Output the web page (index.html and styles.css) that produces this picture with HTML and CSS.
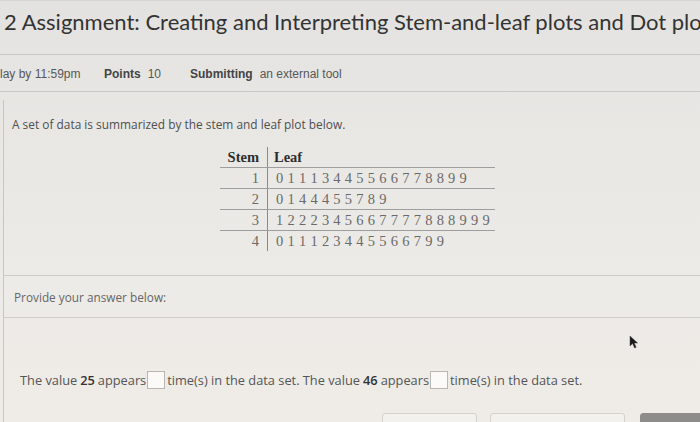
FILE: index.html
```html
<!DOCTYPE html>
<html>
<head>
<meta charset="utf-8">
<link rel="stylesheet" href="styles.css">
</head>
<body>
<div class="page">
  <header class="title-bar">
    <h1 class="title">2 Assignment: Creating and Interpreting Stem-and-leaf plots and Dot plots</h1>
  </header>
  <div class="meta">
    <span class="due">lay by 11:59pm</span>
    <span class="meta-item points"><b>Points</b><span class="val">10</span></span>
    <span class="meta-item"><b>Submitting</b><span class="val">an external tool</span></span>
  </div>
  <section class="question">
    <p class="qtext">A set of data is summarized by the stem and leaf plot below.</p>
    <table class="plot">
      <thead>
        <tr><th class="stem">Stem</th><th class="leaf">Leaf</th></tr>
      </thead>
      <tbody>
        <tr><td class="stem">1</td><td class="leaf">0 1 1 1 3 4 4 5 5 6 6 7 7 8 8 9 9</td></tr>
        <tr><td class="stem">2</td><td class="leaf">0 1 4 4 4 5 5 7 8 9</td></tr>
        <tr><td class="stem">3</td><td class="leaf">1 2 2 2 3 4 5 6 6 7 7 7 7 8 8 8 9 9 9</td></tr>
        <tr class="last"><td class="stem">4</td><td class="leaf">0 1 1 1 2 3 4 4 5 5 6 6 7 9 9</td></tr>
      </tbody>
    </table>
    <div class="provide">Provide your answer below:</div>
    <div class="answer">
      <p class="answer-text">The value <b>25</b> appears<span class="box"></span>time(s) in the data set. The value <b>46</b> appears<span class="box"></span>time(s) in the data set.</p>
    </div>
    <div class="buttons">
      <span class="btn btn-a"></span>
      <span class="btn btn-b"></span>
      <span class="btn btn-dark"></span>
    </div>
  </section>
  <svg class="cursor" width="10" height="14" viewBox="0 0 10 14"><path d="M1 1 L1 11 L3.6 8.6 L5.6 13 L7.2 12.3 L5.2 8 L8.6 8 Z" fill="#1a1a1a" stroke="#444" stroke-width="0.5"/></svg>
</div>
</body>
</html>
```
FILE: styles.css
```css
html, body {
  margin: 0;
  padding: 0;
  overflow: hidden;
}
body {
  width: 700px;
  height: 422px;
  background: linear-gradient(180deg, #e3e2e0 0%, #e8e7e4 30%, #edebe7 70%, #efece7 100%);
}
.page {
  position: relative;
  width: 700px;
  height: 422px;
  overflow: hidden;
}
.title-bar {
  height: 55px;
  border-top: 1px solid #d6d5d3;
  border-bottom: 1px solid #c9c8c5;
  box-sizing: border-box;
  padding: 6px 0 0 4px;
}
.title {
  margin: 0;
  font-family: Lato, "Open Sans", sans-serif;
  font-weight: 400;
  font-size: 22px;
  line-height: 30px;
  color: #333;
  white-space: nowrap;
}
.meta {
  height: 37px;
  box-sizing: border-box;
  border-bottom: 1px solid #c9c8c5;
  display: flex;
  align-items: center;
  font-family: "Liberation Sans", Arial, sans-serif;
  font-size: 12px;
  color: #575757;
  padding-top: 2px;
}
.due {
  width: 104px;
}
.meta-item b {
  color: #444;
  margin-right: 7px;
}
.meta-item.points {
  width: 86px;
}
.question {
  margin-top: 8px;
  border-left: 1px solid #c8c6c2;
  margin-left: 3px;
  height: 330px;
  box-sizing: border-box;
}
.qtext {
  margin: 0;
  padding: 16px 0 0 8px;
  font-family: "Open Sans", sans-serif;
  font-size: 11.9px;
  line-height: 16px;
  color: #505050;
}
.plot {
  margin: 15px 0 0 216px;
  border-collapse: collapse;
  font-family: "Liberation Serif", "Times New Roman", serif;
  font-size: 14.5px;
  color: #6a6a6a;
}
.plot th, .plot td {
  height: 20px;
  padding: 0;
  line-height: 20px;
  border-bottom: 1px solid #9e9e9e;
}
.plot tr.last td {
  border-bottom: none;
}
.plot th {
  color: #2e2e2e;
  font-weight: bold;
  text-align: left;
}
.plot .stem {
  width: 39px;
  padding-right: 8px;
  text-align: right;
  border-right: 1px solid #8a8a8a;
}
.plot .leaf {
  width: 219px;
  padding-left: 8px;
  text-align: left;
  letter-spacing: 0.3px;
  white-space: nowrap;
}
.plot th.leaf {
  padding-left: 6px;
  letter-spacing: 0;
}
.provide {
  margin-top: 24px;
  border-top: 1px solid #cfcdc9;
  border-bottom: 1px solid #cfcdc9;
  height: 43px;
  box-sizing: border-box;
  padding-left: 10px;
  display: flex;
  align-items: center;
  font-family: "Open Sans", sans-serif;
  font-size: 11.8px;
  color: #666;
}
.answer {
  height: 95px;
  box-sizing: border-box;
  padding: 53px 0 0 16px;
}
.answer-text {
  margin: 0;
  font-family: "Open Sans", sans-serif;
  font-size: 12.8px;
  line-height: 18px;
  color: #555;
  white-space: nowrap;
  display: flex;
  align-items: center;
}
.answer-text b {
  color: #333;
  font-weight: 600;
  margin: 0 3px;
}
.box {
  display: inline-block;
  width: 18px;
  height: 18px;
  margin: 0 2px 0 1px;
  background: #fbfaf8;
  border: 1px solid #b9b7b3;
  box-sizing: border-box;
}
.buttons {
  display: flex;
  gap: 13px;
  padding-left: 378px;
}
.btn {
  display: block;
  height: 20px;
  border: 1px solid #d4d2ce;
  border-radius: 3px;
  background: #f3f1ed;
  flex: none;
  box-sizing: border-box;
}
.btn-a { width: 95px; }
.btn-b { width: 135px; margin-right: 2px; }
.btn-dark {
  width: 70px;
  background: #8e8c8a;
  border-color: #8e8c8a;
}
.cursor {
  position: absolute;
  left: 629px;
  top: 335px;
}
```
